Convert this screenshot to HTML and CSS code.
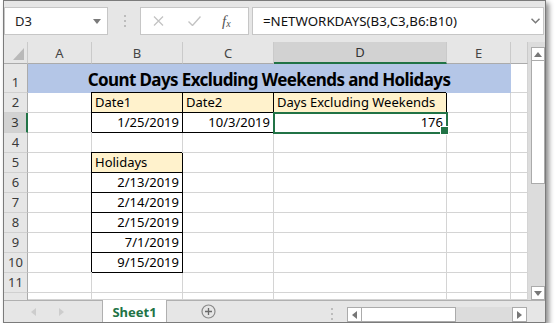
FILE: index.html
```html
<!DOCTYPE html>
<html>
<head>
    <link rel="stylesheet" href="styles.css">
</head>
<body>
    <div class="window">
        <!-- Formula bar -->
        <div class="formula-bar">
            <div class="name-box">
                <span>D3</span>
                <svg class="caret" width="8" height="5" viewBox="0 0 8 5"><path d="M0 0h8L4 5z" fill="#7a7a7a"/></svg>
            </div>
            <div class="grip"><i></i><i></i><i></i></div>
            <div class="fx-box">
                <svg class="cancel" width="11" height="10" viewBox="0 0 11 10"><path d="M1 0.5l9 9M10 0.5l-9 9" stroke="#c3c3c3" stroke-width="1.3"/></svg>
                <svg class="enter" width="13" height="10" viewBox="0 0 13 10"><path d="M0.5 5.5l4 4l8 -9" stroke="#c3c3c3" stroke-width="1.4" fill="none"/></svg>
                <span class="fx">f<sub>x</sub></span>
            </div>
            <div class="formula-input">
                <span>=NETWORKDAYS(B3,C3,B6:B10)</span>
                <svg class="chevron" width="9" height="6" viewBox="0 0 9 6"><path d="M0.5 0.8l4 4l4 -4" stroke="#7a7a7a" stroke-width="1.5" fill="none"/></svg>
            </div>
        </div>

        <!-- Sheet -->
        <div class="sheet">
            <div class="grid">
                <div class="ch corner"><svg width="23" height="21" viewBox="0 0 23 21"><path d="M20 6v12H9z" fill="#b9b9b9"/></svg></div>
                <div class="ch">A</div>
                <div class="ch">B</div>
                <div class="ch">C</div>
                <div class="ch sel-col">D</div>
                <div class="ch">E</div>
                <div class="ch"></div>

                <div class="rh">1</div>
                <div class="title">Count Days Excluding Weekends and Holidays</div>
                <div></div>

                <div class="rh">2</div>
                <div></div>
                <div class="bx hd">Date1</div>
                <div class="bx hd">Date2</div>
                <div class="bx hd">Days Excluding Weekends</div>
                <div></div>
                <div></div>

                <div class="rh sel-row">3</div>
                <div></div>
                <div class="bx num">1/25/2019</div>
                <div class="bx num">10/3/2019</div>
                <div class="bx num active">176</div>
                <div></div>
                <div></div>

                <div class="rh">4</div>
                <div></div><div></div><div></div><div></div><div></div><div></div>

                <div class="rh">5</div>
                <div></div>
                <div class="bx hd">Holidays</div>
                <div></div><div></div><div></div><div></div>

                <div class="rh">6</div>
                <div></div>
                <div class="bx num">2/13/2019</div>
                <div></div><div></div><div></div><div></div>

                <div class="rh">7</div>
                <div></div>
                <div class="bx num">2/14/2019</div>
                <div></div><div></div><div></div><div></div>

                <div class="rh">8</div>
                <div></div>
                <div class="bx num">2/15/2019</div>
                <div></div><div></div><div></div><div></div>

                <div class="rh">9</div>
                <div></div>
                <div class="bx num">7/1/2019</div>
                <div></div><div></div><div></div><div></div>

                <div class="rh">10</div>
                <div></div>
                <div class="bx num">9/15/2019</div>
                <div></div><div></div><div></div><div></div>

                <div class="rh">11</div>
                <div></div><div></div><div></div><div></div><div></div><div></div>

                <div class="rh cut"></div>
                <div></div><div></div><div></div><div></div><div></div><div></div>
            </div>

            <div class="vscroll">
                <div class="sb-btn"><svg width="8" height="5" viewBox="0 0 8 5"><path d="M0 5h8L4 0z" fill="#777"/></svg></div>
                <div class="v-thumb"></div>
                <div class="sb-btn down"><svg width="8" height="5" viewBox="0 0 8 5"><path d="M0 0h8L4 5z" fill="#777"/></svg></div>
            </div>
        </div>

        <!-- Sheet tabs and horizontal scroll -->
        <div class="tab-bar">
            <div class="tab-nav">
                <svg width="5" height="8" viewBox="0 0 5 8"><path d="M5 0v8L0 4z" fill="#cdcdcd"/></svg>
                <svg width="5" height="8" viewBox="0 0 5 8"><path d="M0 0v8L5 4z" fill="#cdcdcd"/></svg>
            </div>
            <div class="sheet-tab">Sheet1</div>
            <svg class="add-sheet" width="15" height="15" viewBox="0 0 15 15">
                <circle cx="7.5" cy="7.5" r="6.5" fill="none" stroke="#8a8a8a" stroke-width="1.2"/>
                <path d="M7.5 4v7M4 7.5h7" stroke="#6a6a6a" stroke-width="1.3"/>
            </svg>
            <div class="grip tab-grip"><i></i><i></i><i></i></div>
            <div class="hscroll">
                <div class="sb-btn"><svg width="5" height="8" viewBox="0 0 5 8"><path d="M5 0v8L0 4z" fill="#777"/></svg></div>
                <div class="h-thumb"></div>
                <div class="h-track"></div>
                <div class="sb-btn"><svg width="5" height="8" viewBox="0 0 5 8"><path d="M0 0v8L5 4z" fill="#777"/></svg></div>
            </div>
        </div>
    </div>
</body>
</html>
```

FILE: styles.css
```css
* {
    box-sizing: border-box;
}
body {
    margin: 0;
    background: #fff;
    font-family: "Noto Sans", sans-serif;
    font-size: 13px;
    color: #000;
}
.window {
    margin-left: 3px;
    width: 543px;
    height: 323px;
    border: 1px solid #7b7b7b;
    box-shadow: 3px 3px 5px rgba(0, 0, 0, 0.45);
    background: #e6e6e6;
    display: flex;
    flex-direction: column;
}

/* formula bar */
.formula-bar {
    height: 41px;
    display: flex;
    align-items: flex-start;
    padding-top: 6px;
}
.name-box {
    width: 104px;
    height: 28px;
    background: #fff;
    border: 1px solid #c6c6c6;
    display: flex;
    align-items: center;
    padding-left: 10px;
    color: #222;
}
.name-box .caret {
    margin-left: auto;
    margin-right: 6px;
}
.grip {
    display: flex;
    flex-direction: column;
    gap: 3px;
    margin-left: 16px;
    margin-top: 8px;
}
.grip i {
    display: block;
    width: 2px;
    height: 2px;
    background: #bcbcbc;
}
.fx-box {
    width: 109px;
    height: 28px;
    margin-left: 14px;
    background: #fff;
    border: 1px solid #c6c6c6;
    display: flex;
    align-items: center;
    padding-left: 12px;
}
.fx-box .enter {
    margin-left: 24px;
}
.fx {
    margin-left: 21px;
    font-family: "Liberation Serif", serif;
    font-style: italic;
    font-size: 15px;
    color: #555;
}
.fx sub {
    font-size: 10px;
    vertical-align: -1px;
}
.formula-input {
    flex: 1;
    height: 28px;
    margin-left: 3px;
    margin-right: 1px;
    background: #fff;
    border: 1px solid #c6c6c6;
    display: flex;
    align-items: center;
    padding-left: 10px;
    font-size: 13.3px;
    color: #111;
}
.formula-input .chevron {
    margin-left: auto;
    margin-right: 3px;
}

/* grid */
.sheet {
    display: flex;
}
.grid {
    display: grid;
    grid-template-columns: 24px 64px 91px 91px 173px 64px 17px;
    grid-template-rows: 22px 29px repeat(10, 20px) 7px;
    background: #fff;
}
.grid > div {
    border-right: 1px solid #d4d4d4;
    border-bottom: 1px solid #d4d4d4;
    display: flex;
    align-items: flex-end;
    padding: 0 3px 2px;
    line-height: 15px;
    white-space: nowrap;
    overflow: hidden;
}
.grid > .ch {
    background: #e6e6e6;
    border-right-color: #cacaca;
    border-bottom-color: #ababab;
    justify-content: center;
    align-items: center;
    padding: 1px 0 0;
    color: #444;
}
.grid > .corner {
    padding: 0;
    align-items: flex-start;
    justify-content: flex-start;
}
.grid > .rh {
    background: #e6e6e6;
    border-right-color: #ababab;
    border-bottom-color: #d0d0d0;
    justify-content: center;
    padding: 0 0 2px;
    color: #3a3a3a;
}
.grid > .cut {
    border-bottom: none;
}
.grid > .sel-col {
    background: #d2d2d2;
    border-bottom: 2px solid #217346;
    color: #333;
}
.grid > .sel-row {
    background: #d2d2d2;
    border-right: 2px solid #217346;
    color: #333;
}
.grid > .title {
    grid-column: 2 / 7;
    background: #b4c6e7;
    border-right-color: #b4c6e7;
    border-bottom-color: #b4c6e7;
    justify-content: center;
    font-weight: 700;
    font-size: 17px;
    letter-spacing: -0.6px;
    line-height: 20px;
    padding-bottom: 2px;
}
.grid > .bx {
    border-right-color: #000;
    border-bottom-color: #000;
    box-shadow: -1px -1px 0 #000;
}
.grid > .hd {
    background: #fff2cc;
}
.grid > .num {
    justify-content: flex-end;
}
.grid > .active {
    position: relative;
    z-index: 1;
    overflow: visible;
    outline: 2px solid #217346;
    outline-offset: -1px;
}
.active::after {
    content: "";
    position: absolute;
    right: -3px;
    bottom: -3px;
    width: 7px;
    height: 7px;
    background: #217346;
    border: 1px solid #fff;
}

/* scrollbars */
.vscroll {
    width: 17px;
    background: #dcdcdc;
    display: flex;
    flex-direction: column;
    align-items: flex-end;
    padding-top: 5px;
}
.sb-btn {
    width: 14px;
    height: 14px;
    background: #fff;
    border: 1px solid #ababab;
    display: flex;
    align-items: center;
    justify-content: center;
}
.v-thumb {
    width: 14px;
    height: 124px;
    margin-top: -1px;
    background: #fff;
    border: 1px solid #ababab;
}
.vscroll .down {
    margin-top: auto;
}

/* tab bar */
.tab-bar {
    height: 22px;
    display: flex;
    align-items: flex-start;
    border-top: 1px solid #b0b0b0;
}
.tab-nav {
    width: 99px;
    height: 21px;
    border-right: 1px solid #b0b0b0;
    display: flex;
    align-items: center;
    gap: 23px;
    padding-left: 27px;
}
.sheet-tab {
    width: 64px;
    height: 22px;
    margin-top: -1px;
    background: #fff;
    border-right: 1px solid #b0b0b0;
    color: #217346;
    font-weight: 700;
    font-size: 13px;
    display: flex;
    align-items: center;
    justify-content: center;
    padding-top: 1px;
}
.add-sheet {
    margin-left: 34px;
    margin-top: 3px;
}
.tab-grip {
    margin-left: 115px;
    margin-top: 7px;
}
.hscroll {
    display: flex;
    width: 180px;
    margin-left: 14px;
    margin-top: 6px;
    background: #dcdcdc;
}
.hscroll .sb-btn {
    width: 15px;
    height: 15px;
}
.h-thumb {
    width: 95px;
    height: 15px;
    margin-left: -1px;
    background: #fff;
    border: 1px solid #ababab;
}
.h-track {
    flex: 1;
}
```
